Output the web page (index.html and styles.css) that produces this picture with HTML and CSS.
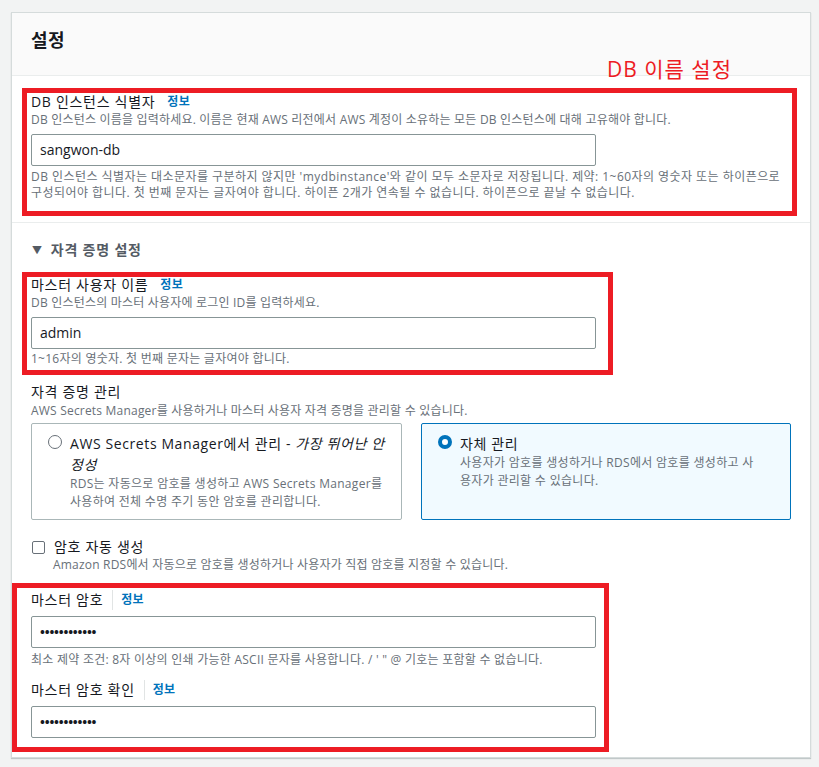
FILE: index.html
```html
<!DOCTYPE html>
<html lang="ko">
<head>
<meta charset="utf-8">
<title>설정</title>
<link rel="stylesheet" href="styles.css">
</head>
<body>
<div class="page">
  <div class="card">
    <div class="card-header"><h2 class="title">설정</h2></div>

    <div class="section section-first">
      <div class="field">
        <div class="label">DB 인스턴스 식별자 <a class="info">정보</a></div>
        <div class="desc">DB 인스턴스 이름을 입력하세요. 이름은 현재 AWS 리전에서 AWS 계정이 소유하는 모든 DB 인스턴스에 대해 고유해야 합니다.</div>
        <div class="input">sangwon-db</div>
        <div class="help help-wide">DB 인스턴스 식별자는 대소문자를 구분하지 않지만 'mydbinstance'와 같이 모두 소문자로 저장됩니다. 제약: 1~60자의 영숫자 또는 하이픈으로 구성되어야 합니다. 첫 번째 문자는 글자여야 합니다. 하이픈 2개가 연속될 수 없습니다. 하이픈으로 끝날 수 없습니다.</div>
      </div>
    </div>

    <div class="section section-second">
      <div class="expander"><span class="caret">▼</span>자격 증명 설정</div>

      <div class="field field-user">
        <div class="label">마스터 사용자 이름 <a class="info">정보</a></div>
        <div class="desc">DB 인스턴스의 마스터 사용자에 로그인 ID를 입력하세요.</div>
        <div class="input">admin</div>
        <div class="help help-tight">1~16자의 영숫자. 첫 번째 문자는 글자여야 합니다.</div>
      </div>

      <div class="field field-cred">
        <div class="label">자격 증명 관리</div>
        <div class="desc">AWS Secrets Manager를 사용하거나 마스터 사용자 자격 증명을 관리할 수 있습니다.</div>
        <div class="tiles">
          <div class="tile">
            <span class="radio"></span>
            <div class="tile-body">
              <div class="tile-title">AWS Secrets Manager에서 관리 - <i class="best">가장 뛰어난 안정성</i></div>
              <div class="tile-desc">RDS는 자동으로 암호를 생성하고 AWS Secrets Manager를 사용하여 전체 수명 주기 동안 암호를 관리합니다.</div>
            </div>
          </div>
          <div class="tile tile-selected">
            <span class="radio radio-on"></span>
            <div class="tile-body">
              <div class="tile-title">자체 관리</div>
              <div class="tile-desc">사용자가 암호를 생성하거나 RDS에서 암호를 생성하고 사용자가 관리할 수 있습니다.</div>
            </div>
          </div>
        </div>
      </div>

      <div class="check-row">
        <span class="checkbox"></span>
        <div>
          <div class="label">암호 자동 생성</div>
          <div class="desc">Amazon RDS에서 자동으로 암호를 생성하거나 사용자가 직접 암호를 지정할 수 있습니다.</div>
        </div>
      </div>

      <div class="field field-pw">
        <div class="label">마스터 암호<span class="sep"></span><a class="info info-sep">정보</a></div>
        <div class="input input-pw">••••••••••••</div>
        <div class="help help-pw">최소 제약 조건: 8자 이상의 인쇄 가능한 ASCII 문자를 사용합니다. / ' " @ 기호는 포함할 수 없습니다.</div>
      </div>

      <div class="field field-pw2">
        <div class="label">마스터 암호 확인<span class="sep"></span><a class="info info-sep">정보</a></div>
        <div class="input input-pw">••••••••••••</div>
      </div>
    </div>

    <div class="mark mark-1"></div>
    <div class="mark mark-2"></div>
    <div class="mark mark-3"></div>
    <div class="mark-note">DB 이름 설정</div>
  </div>
</div>
</body>
</html>
```

FILE: styles.css
```css
* { box-sizing: border-box; }
html, body { margin: 0; padding: 0; }
body {
  background: #f2f3f3;
  font-family: "Open Sans", "Noto Sans CJK KR", sans-serif;
  color: #16191f;
  width: 819px;
  height: 767px;
  overflow: hidden;
}
.page { padding: 12px 0 0 11px; }
.card {
  position: relative;
  width: 800px;
  background: #fff;
  border: 1px solid #d5dbdb;
  box-shadow: 0 1px 1px rgba(0,28,36,0.2);
}
.card-header {
  height: 63px;
  background: #fafafa;
  border-bottom: 1px solid #eaeded;
  padding: 0 19px;
  display: flex;
  align-items: center;
}
.title {
  margin: 0;
  font-size: 18px;
  font-weight: 700;
  line-height: 24px;
  padding-bottom: 8px;
  letter-spacing: 0.5px;
}
.section { padding: 0 19px; }
.section-first { padding-top: 16px; padding-bottom: 21px; border-bottom: 1px solid #eaeded; }
.section-second { padding-top: 17px; padding-bottom: 19px; }

.label { font-size: 14px; line-height: 20px; color: #16191f; display: flex; align-items: center; letter-spacing: 0.7px; }
.info { color: #0073bb; font-size: 12px; font-weight: 700; margin-left: 12px; letter-spacing: 0.3px; }
.info-sep { margin-left: 8px; }
.sep { display: inline-block; width: 1px; height: 20px; background: #e1e4e4; margin-left: 9px; }
.desc { font-size: 12px; line-height: 16px; color: #687078; letter-spacing: 0.2px; }
.input {
  width: 565px;
  height: 32px;
  margin-top: 6px;
  border: 1px solid #879596;
  border-radius: 2px;
  padding: 0 8px;
  font-size: 14px;
  line-height: 30px;
  color: #16191f;
  letter-spacing: 0;
}
.input-pw { font-size: 13px; letter-spacing: -0.2px; font-weight: 700; }
.help { font-size: 12px; line-height: 16px; color: #687078; margin-top: 3px; letter-spacing: 0.25px; }
.help-wide { letter-spacing: 0.45px; }
.help-tight { margin-top: 2px; }
.help-pw { margin-top: 4px; }

.expander { font-size: 14px; line-height: 20px; font-weight: 700; color: #545b64; display: flex; align-items: center; letter-spacing: 0.8px; }
.caret { font-size: 10px; margin-left: 1px; margin-right: 8px; color: #545b64; }

.field-user { margin-top: 15px; }
.field-cred { margin-top: 15px; }
.field-cred .desc { margin-top: 1px; }
.tiles { display: grid; grid-template-columns: 371px 370px; column-gap: 19px; margin-top: 4px; }
.tile {
  border: 1px solid #aab7b8;
  border-radius: 2px;
  padding: 9px 16px 8px;
  display: flex;
  gap: 8px;
}
.tile-selected { background: #f1faff; border-color: #0073bb; padding-right: 28px; }
.radio {
  flex: none;
  width: 14px;
  height: 14px;
  border-radius: 50%;
  border: 1.5px solid #687078;
  margin-top: 2px;
  background: #fff;
}
.radio-on { border: 4px solid #0073bb; }
.tile-title { font-size: 14px; line-height: 21px; letter-spacing: 0.6px; }
.tile-title .best { font-style: italic; }
.tile-desc { font-size: 12px; line-height: 18px; color: #687078; letter-spacing: 0.3px; }

.check-row { margin-top: 17px; display: flex; gap: 8px; }
.checkbox {
  flex: none;
  width: 13px;
  height: 13px;
  border: 1.5px solid #687078;
  border-radius: 2px;
  margin-top: 4px;
  margin-left: 1px;
}
.check-row .label { margin-left: 1px; }
.field-pw { margin-top: 17px; }
.field-pw2 { margin-top: 12px; }

.mark { position: absolute; border: 5px solid #ed1c24; }
.mark-1 { left: 10px; top: 75px; width: 775px; height: 128px; }
.mark-2 { left: 10px; top: 259px; width: 591px; height: 103px; }
.mark-3 { left: 0; top: 570px; width: 597px; height: 169px; }
.mark-note {
  position: absolute;
  left: 595px;
  top: 42px;
  font-size: 21px;
  line-height: 28px;
  color: #ed1c24;
  letter-spacing: 1px;
}
```
